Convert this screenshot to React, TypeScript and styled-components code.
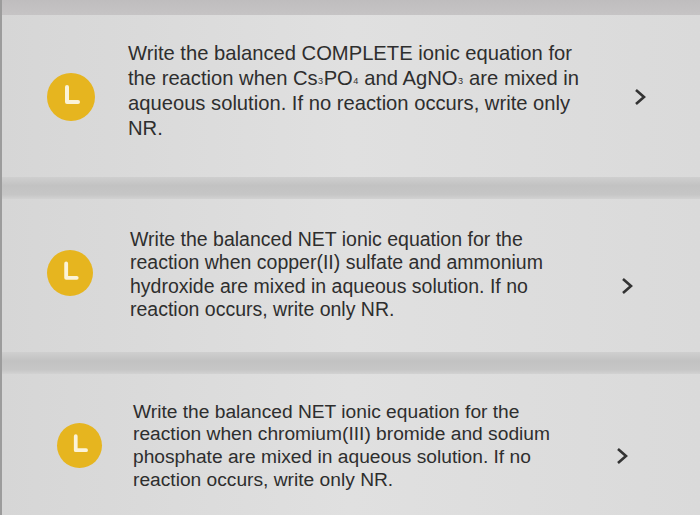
import styled, { createGlobalStyle } from 'styled-components';

const GlobalStyle = createGlobalStyle`
  html, body {
    margin: 0;
    padding: 0;
    background: #d9d9d9;
  }
  body {
    font-family: 'Liberation Sans', Arial, sans-serif;
    color: #2e2e2e;
  }
`;

const Page = styled.div`
  width: 700px;
  height: 515px;
  overflow: hidden;
  display: flex;
  flex-direction: column;
  border-left: 2px solid #9c9c9c;
  box-sizing: border-box;
  background: #dcdcdc;
`;

const TopStrip = styled.div`
  height: 15px;
  flex-shrink: 0;
  background: linear-gradient(#bfbdbe, #c6c4c5);
`;

const Band = styled.div`
  height: 22px;
  flex-shrink: 0;
  background: linear-gradient(#cfcfcf, #c2c2c2 40%, #c6c6c6 80%, #d2d2d2);
`;

type CardProps = {
  $height: number;
  $iconLeft: number;
  $gap: number;
};

const Card = styled.div<CardProps>`
  height: ${(p) => p.$height}px;
  flex-shrink: 0;
  display: flex;
  align-items: center;
  padding-left: ${(p) => p.$iconLeft}px;
  gap: ${(p) => p.$gap}px;
  background: linear-gradient(90deg, #d6d6d6, #e0e0e0 50%, #dadada);
`;

const IconWrap = styled.div<{ $size: number; $shift: number }>`
  width: ${(p) => p.$size}px;
  height: ${(p) => p.$size}px;
  flex-shrink: 0;
  border-radius: 50%;
  background: #e6b51f;
  display: flex;
  align-items: center;
  justify-content: center;
  transform: translateY(${(p) => p.$shift}px);
`;

const Prompt = styled.p<{ $size: number; $line: number; $shift: number; $width: number }>`
  margin: 0;
  width: ${(p) => p.$width}px;
  flex-shrink: 0;
  font-size: ${(p) => p.$size}px;
  line-height: ${(p) => p.$line}px;
  white-space: nowrap;
  transform: translateY(${(p) => p.$shift}px);
`;

const Sub = styled.sub`
  font-size: 0.45em;
  line-height: 0;
  vertical-align: 0.1em;
  margin: 0 0.05em;
`;

const Chevron = styled.svg<{ $shift: number }>`
  flex-shrink: 0;
  transform: translateY(${(p) => p.$shift}px);
`;

const LateIcon = ({ size, shift }: { size: number; shift: number }) => (
  <IconWrap $size={size} $shift={shift}>
    <svg width={size} height={size} viewBox="0 0 48 48">
      <polyline
        points="20,14 20,29 31,29"
        fill="none"
        stroke="#fbf3d8"
        strokeWidth="4"
        strokeLinecap="round"
        strokeLinejoin="round"
      />
    </svg>
  </IconWrap>
);

const Arrow = ({ shift }: { shift: number }) => (
  <Chevron $shift={shift} width="14" height="18" viewBox="0 0 14 18">
    <polyline
      points="3,2 11,9 3,16"
      fill="none"
      stroke="#333"
      strokeWidth="2.6"
      strokeLinejoin="miter"
    />
  </Chevron>
);

export default function App() {
  return (
    <>
      <GlobalStyle />
      <Page>
        <TopStrip />
        <Card $height={162} $iconLeft={45} $gap={33}>
          <LateIcon size={48} shift={1} />
          <Prompt $size={20.2} $line={25} $shift={-5} $width={472}>
            Write the balanced COMPLETE ionic equation for
            <br />
            the reaction when Cs<Sub>3</Sub>PO<Sub>4</Sub> and AgNO<Sub>3</Sub> are mixed in
            <br />
            aqueous solution. If no reaction occurs, write only
            <br />
            NR.
          </Prompt>
          <Arrow shift={1} />
        </Card>
        <Band />
        <Card $height={153} $iconLeft={45} $gap={37}>
          <LateIcon size={46} shift={-3} />
          <Prompt $size={19.5} $line={23.5} $shift={-1} $width={453}>
            Write the balanced NET ionic equation for the
            <br />
            reaction when copper(II) sulfate and ammonium
            <br />
            hydroxide are mixed in aqueous solution. If no
            <br />
            reaction occurs, write only NR.
          </Prompt>
          <Arrow shift={10} />
        </Card>
        <Band />
        <Card $height={150} $iconLeft={55} $gap={31}>
          <LateIcon size={45} shift={-4} />
          <Prompt $size={19.2} $line={22.7} $shift={-3} $width={451}>
            Write the balanced NET ionic equation for the
            <br />
            reaction when chromium(III) bromide and sodium
            <br />
            phosphate are mixed in aqueous solution. If no
            <br />
            reaction occurs, write only NR.
          </Prompt>
          <Arrow shift={7} />
        </Card>
      </Page>
    </>
  );
}
